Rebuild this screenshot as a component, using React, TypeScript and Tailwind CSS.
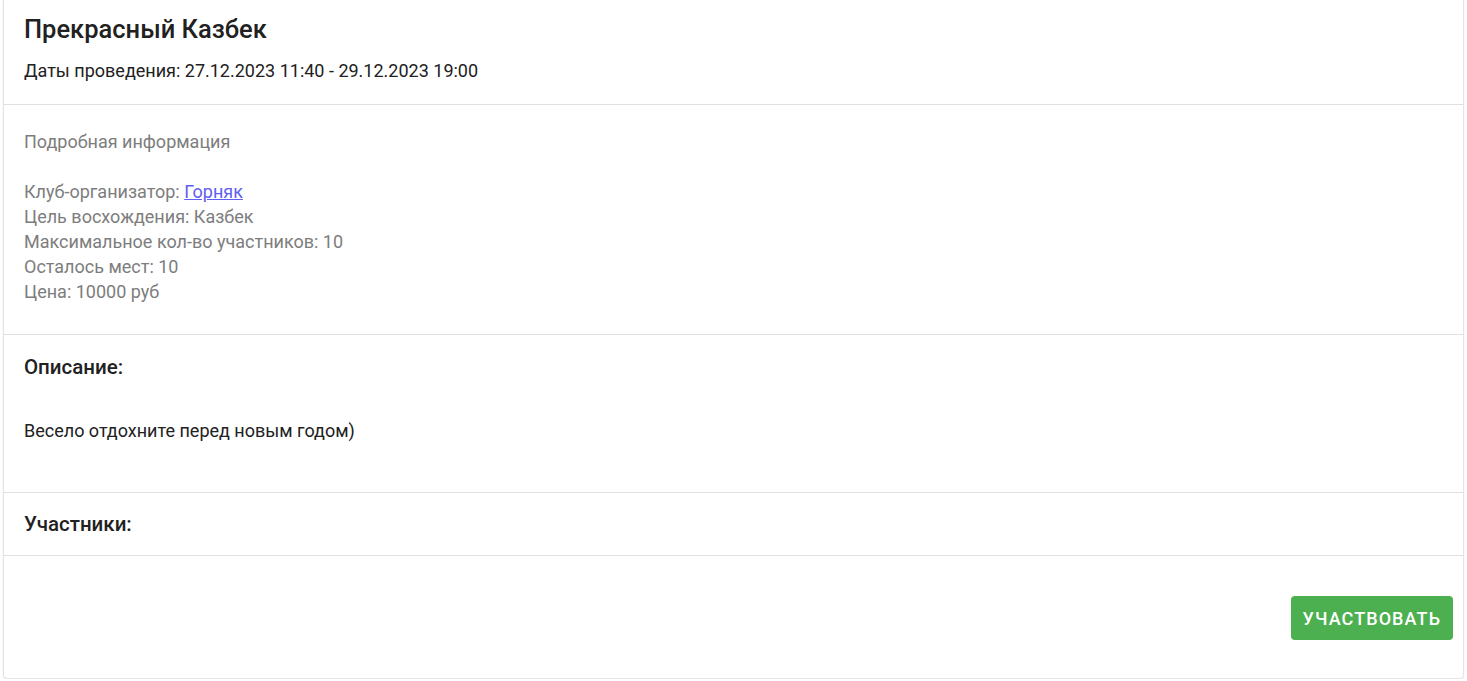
export default function App() {
  return (
    <div className="min-h-screen bg-white font-['Roboto',sans-serif] text-[#212121]">
      <div className="mx-[3px] -mt-[4px] rounded-[4px] border border-[#e4e4e4] bg-white shadow-[0_1px_2px_rgba(0,0,0,0.08)]">
        <div className="border-b border-[#e0e0e0] px-5 pb-[21px] pt-[18px]">
          <h1 className="text-[25.5px] font-medium leading-[28px] text-[#212121]">Прекрасный Казбек</h1>
          <p className="mt-[16px] text-[18px] leading-[24px] text-[#212121]">
            Даты проведения: 27.12.2023 11:40 - 29.12.2023 19:00
          </p>
        </div>

        <div className="border-b border-[#e0e0e0] px-5 pb-[30px] pt-[24px] text-[18px] leading-[25px] text-[#7d7d7d]">
          <p>Подробная информация</p>
          <p className="mt-[25px]">
            Клуб-организатор:{' '}
            <a href="#" className="text-[#5e5ef0] underline">
              Горняк
            </a>
          </p>
          <p>Цель восхождения: Казбек</p>
          <p>Максимальное кол-во участников: 10</p>
          <p>Осталось мест: 10</p>
          <p>Цена: 10000 руб</p>
        </div>

        <div className="h-[158px] border-b border-[#e0e0e0] px-5 pt-[19px]">
          <h2 className="text-[20.5px] font-medium leading-[27px] text-[#212121]">Описание:</h2>
          <p className="mt-[38px] text-[18px] leading-[24px] text-[#212121]">Весело отдохните перед новым годом)</p>
        </div>

        <div className="h-[63px] border-b border-[#e0e0e0] px-5 pt-[18px]">
          <h2 className="text-[20.5px] font-medium leading-[27px] text-[#212121]">Участники:</h2>
        </div>

        <div className="flex justify-end pb-[38px] pr-[10px] pt-[40px]">
          <button className="h-[44px] rounded-[4px] bg-[#4caf50] px-[12px] text-[18px] font-medium uppercase tracking-[0.06em] text-white">
            Участвовать
          </button>
        </div>
      </div>
    </div>
  );
}
